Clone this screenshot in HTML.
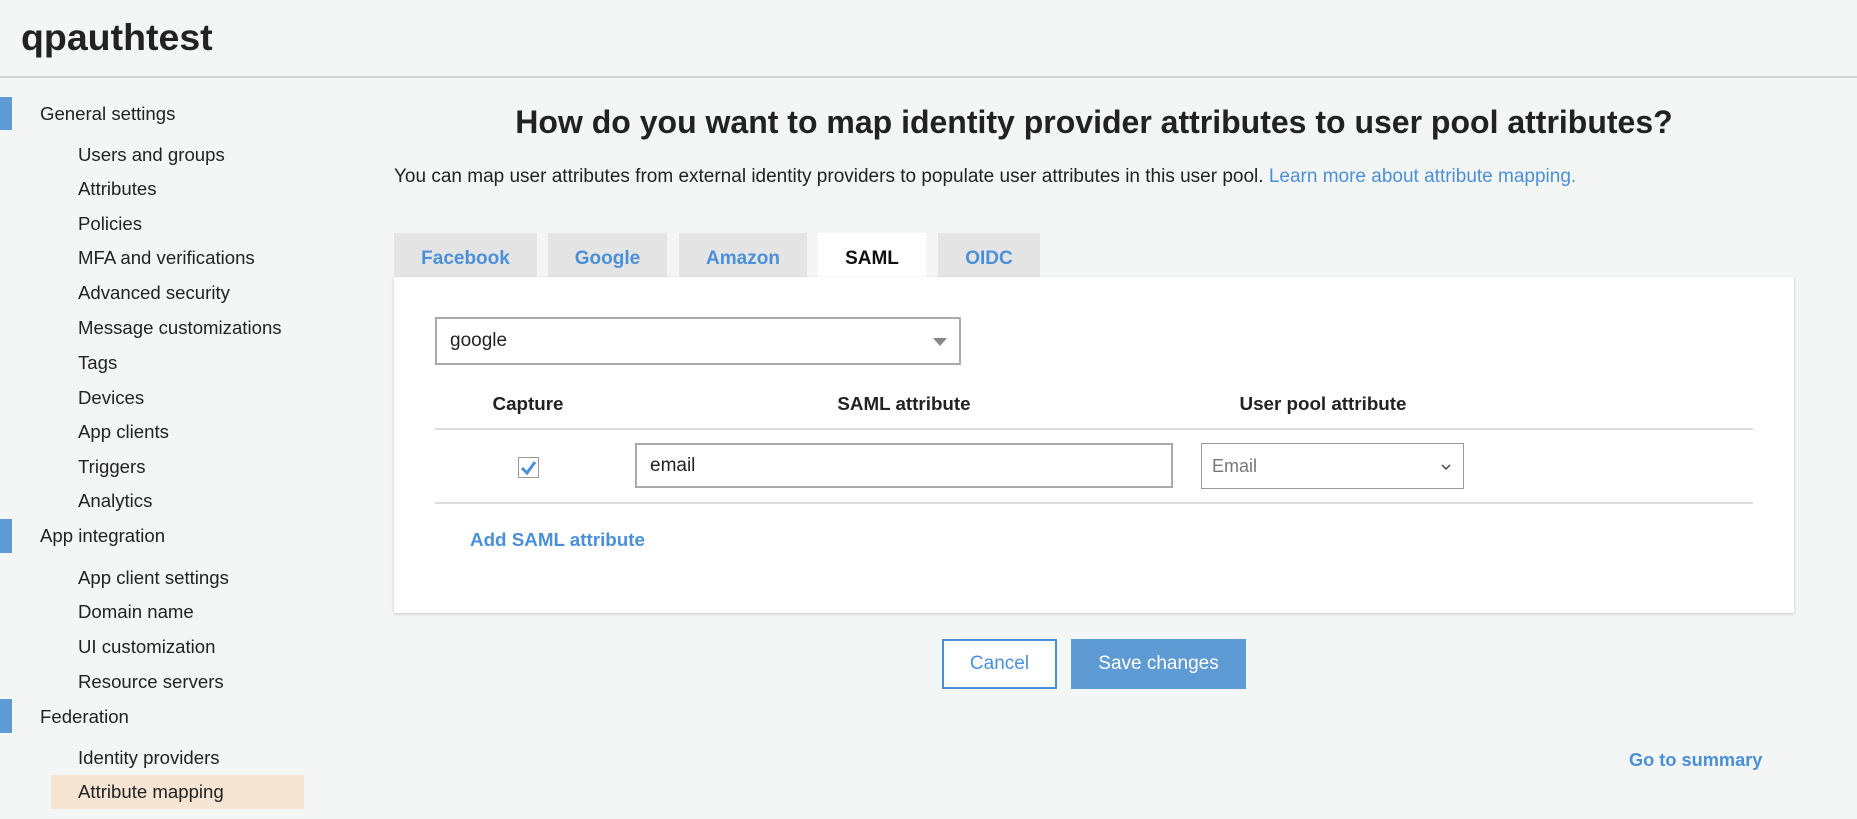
<!DOCTYPE html>
<html><head><meta charset="utf-8"><style>
*{margin:0;padding:0;box-sizing:border-box}
body{width:1857px;height:819px;background:#f4f5f5;font-family:"Liberation Sans",Arial,sans-serif;color:#222;position:relative;overflow:hidden}
.a{position:absolute;white-space:nowrap}
.bar{position:absolute;left:0;width:12px;background:#5e9ad3}
.nav{position:absolute;left:78px;font-size:18.6px;line-height:24px;color:#222}
.sec{position:absolute;left:40px;font-size:18.6px;line-height:24px;color:#222}
.tab{position:absolute;top:233px;height:44px;background:#e5e4e4;color:#4a90d9;font-weight:bold;font-size:19px;display:flex;align-items:center;justify-content:center;padding-top:8px}
.blue{color:#4a90d9}
</style></head><body>
<div class="a" style="left:21px;top:15px;font-size:37.5px;font-weight:bold;color:#222;line-height:44px">qpauthtest</div>
<div class="a" style="left:0;top:76px;width:1857px;height:2px;background:#d4d4d4"></div>

<div class="bar" style="top:97px;height:33px"></div>
<div class="sec" style="top:102px">General settings</div>
<div class="nav" style="top:143px">Users and groups</div>
<div class="nav" style="top:177px">Attributes</div>
<div class="nav" style="top:212px">Policies</div>
<div class="nav" style="top:246px">MFA and verifications</div>
<div class="nav" style="top:281px">Advanced security</div>
<div class="nav" style="top:316px">Message customizations</div>
<div class="nav" style="top:351px">Tags</div>
<div class="nav" style="top:386px">Devices</div>
<div class="nav" style="top:420px">App clients</div>
<div class="nav" style="top:455px">Triggers</div>
<div class="nav" style="top:489px">Analytics</div>
<div class="bar" style="top:519px;height:34px"></div>
<div class="sec" style="top:524px">App integration</div>
<div class="nav" style="top:566px">App client settings</div>
<div class="nav" style="top:600px">Domain name</div>
<div class="nav" style="top:635px">UI customization</div>
<div class="nav" style="top:670px">Resource servers</div>
<div class="bar" style="top:699px;height:34px"></div>
<div class="sec" style="top:705px">Federation</div>
<div class="nav" style="top:746px">Identity providers</div>
<div class="a" style="left:51px;top:775px;width:253px;height:34px;background:#f5e5d2"></div>
<div class="nav" style="top:780px">Attribute mapping</div>

<div class="a" style="left:394px;width:1400px;top:102px;text-align:center;font-size:32px;font-weight:bold;line-height:40px;color:#222">How do you want to map identity provider attributes to user pool attributes?</div>
<div class="a" style="left:394px;top:165px;font-size:19px;line-height:24px">You can map user attributes from external identity providers to populate user attributes in this user pool. <span class="blue">Learn more about attribute mapping.</span></div>

<div class="tab" style="left:394px;width:143px">Facebook</div>
<div class="tab" style="left:548px;width:119px">Google</div>
<div class="tab" style="left:679px;width:128px">Amazon</div>
<div class="tab" style="left:818px;width:108px;background:#fff;color:#111">SAML</div>
<div class="tab" style="left:938px;width:102px">OIDC</div>

<div class="a" style="left:394px;top:277px;width:1400px;height:336px;background:#fff;box-shadow:0 1px 3px rgba(0,0,0,.2)"></div>
<div class="a" style="left:435px;top:317px;width:526px;height:48px;border:2px solid #aaa;background:#fff;font-size:19px;line-height:44px;padding-left:13px">google
<svg style="position:absolute;right:12px;top:19px" width="14" height="8"><path d="M0 0H14L7 8Z" fill="#888"/></svg></div>
<div class="a" style="left:478px;width:100px;text-align:center;top:392px;font-size:18.8px;font-weight:bold;line-height:24px">Capture</div>
<div class="a" style="left:804px;width:200px;text-align:center;top:392px;font-size:18.8px;font-weight:bold;line-height:24px">SAML attribute</div>
<div class="a" style="left:1223px;width:200px;text-align:center;top:392px;font-size:18.8px;font-weight:bold;line-height:24px">User pool attribute</div>
<div class="a" style="left:435px;top:428px;width:1318px;height:2px;background:#ddd"></div>
<div class="a" style="left:518px;top:457px;width:21px;height:21px;border:1px solid #999;background:#fff">
<svg width="19" height="19" viewBox="0 0 19 19"><path d="M3 10L8 15L16 4" stroke="#4a90d9" stroke-width="3" fill="none"/></svg></div>
<div class="a" style="left:635px;top:443px;width:538px;height:45px;border:2px solid #aaa;background:#fff;font-size:19px;line-height:41px;padding-left:13px">email</div>
<div class="a" style="left:1201px;top:443px;width:263px;height:46px;border:1px solid #999;background:#fff;font-size:18px;line-height:44px;padding-left:10px;color:#777">Email
<svg style="position:absolute;right:12px;top:20px" width="10" height="7"><path d="M1 1L5 5L9 1" stroke="#444" stroke-width="1.5" fill="none"/></svg></div>
<div class="a" style="left:435px;top:502px;width:1318px;height:2px;background:#ddd"></div>
<div class="a blue" style="left:470px;top:528px;font-size:18.8px;font-weight:bold;line-height:24px">Add SAML attribute</div>

<div class="a" style="left:942px;top:639px;width:115px;height:50px;border:2px solid #4a90d9;background:#fff;color:#4a90d9;font-size:19px;line-height:46px;text-align:center">Cancel</div>
<div class="a" style="left:1071px;top:639px;width:175px;height:50px;background:#5e9ad3;color:#fff;font-size:19px;line-height:50px;text-align:center">Save changes</div>
<div class="a blue" style="left:1629px;top:748px;font-size:18.2px;font-weight:bold;line-height:24px">Go to summary</div>
</body></html>
